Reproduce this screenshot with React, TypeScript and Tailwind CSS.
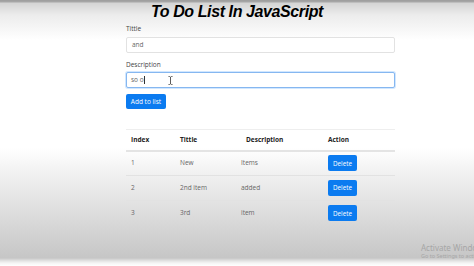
import React from "react";

const rows = [
  { i: "1", t: "New", d: "Items" },
  { i: "2", t: "2nd item", d: "added" },
  { i: "3", t: "3rd", d: "item" },
];

export default function App() {
  return (
    <div
      className="relative h-[266px] w-[474px] overflow-hidden bg-[linear-gradient(to_bottom,#9c9c9c_0px,#a8a8a8_2px,#d4d4d4_3px,#ececec_15px,#ffffff_40px,#ffffff_148px,#f0f0f0_175px,#dcdcdc_215px,#c6c6c6_258px,#e4e4e4_261px,#f4f4f4_263px,#ffffff_266px)] text-[#495057]"
      style={{ fontFamily: '"Open Sans", "Noto Sans", sans-serif' }}
    >
      <div className="flex flex-col">
        <h1
          className="h-[23px] pt-[1px] text-center text-[16px] font-bold italic leading-[22px] tracking-[-0.4px] text-black"
          style={{ fontFamily: '"Liberation Sans", Arial, sans-serif' }}
        >
          To Do List In JavaScript
        </h1>
        <div className="ml-[126px] flex w-[269px] flex-col">
          <label className="mt-[1px] h-[9px] text-[6.5px] leading-[9px] text-[#444]">Tittle</label>
          <div className="mt-[4px] flex h-[16px] items-center rounded-[2px] border border-[#e2e2e2] bg-white px-[5px] text-[6.5px] text-[#666]">
            and
          </div>
          <label className="mt-[7px] h-[9px] text-[6.5px] leading-[9px] text-[#444]">Description</label>
          <div className="relative mt-[3px] flex h-[16px] items-center rounded-[2px] border border-[#86b7f0] bg-white px-[4px] text-[6.5px] text-[#666] shadow-[0_0_0_1px_rgba(0,123,255,0.18)]">
            <span>so o</span>
            <span className="ml-[0.5px] h-[8px] w-[0.6px] bg-[#333]" />
            <svg className="absolute left-[41px] top-[3px]" width="5" height="9" viewBox="0 0 5 9">
              <path d="M0.5 0.5 H1.5 L2.5 1.2 L3.5 0.5 H4.5 M2.5 1.2 V7.8 M0.5 8.5 H1.5 L2.5 7.8 L3.5 8.5 H4.5" stroke="#333" strokeWidth="0.8" fill="none" />
            </svg>
          </div>
          <button className="mt-[6px] flex h-[15px] w-[40px] items-center justify-center rounded-[2px] bg-[#0b7bf0] text-[6.5px] text-white">
            Add to list
          </button>

          <table className="mt-[20px] w-full border-collapse border-t border-[#eeeeee] text-left text-[6.5px]">
            <thead>
              <tr className="h-[21px] border-b-2 border-[#e4e4e4]">
                <th className="w-[54px] pl-[5px] font-bold text-[#222]">Index</th>
                <th className="w-[65px] pl-[0px] font-bold text-[#222]">Tittle</th>
                <th className="w-[83px] pl-[1px] font-bold text-[#222]">Description</th>
                <th className="pl-0 font-bold text-[#222]">Action</th>
              </tr>
            </thead>
            <tbody>
              {rows.map((r, idx) => (
                <tr key={r.i} className={`h-[25px] ${idx < 2 ? "border-b border-[#e2e2e2]" : ""}`}>
                  <td className="pl-[5px] text-[#666]">{r.i}</td>
                  <td className="pl-[0px] text-[#666]">{r.t}</td>
                  <td className="text-[#666]">
                    <span className="-ml-[4px]">{r.d}</span>
                  </td>
                  <td className="pl-0">
                    <button className="flex h-[16px] w-[29px] items-center justify-center rounded-[2px] bg-[#0b7bf0] text-[6.3px] text-white">
                      Delete
                    </button>
                  </td>
                </tr>
              ))}
            </tbody>
          </table>
        </div>
      </div>

      <div className="absolute left-[421px] top-[243px] whitespace-nowrap text-[#a6a6a6]" style={{ fontFamily: '"Noto Sans", sans-serif' }}>
        <div className="text-[8px] leading-[10px]">Activate Windows</div>
        <div className="text-[5.5px] leading-[7px]">Go to Settings to activate Windows.</div>
      </div>
    </div>
  );
}
